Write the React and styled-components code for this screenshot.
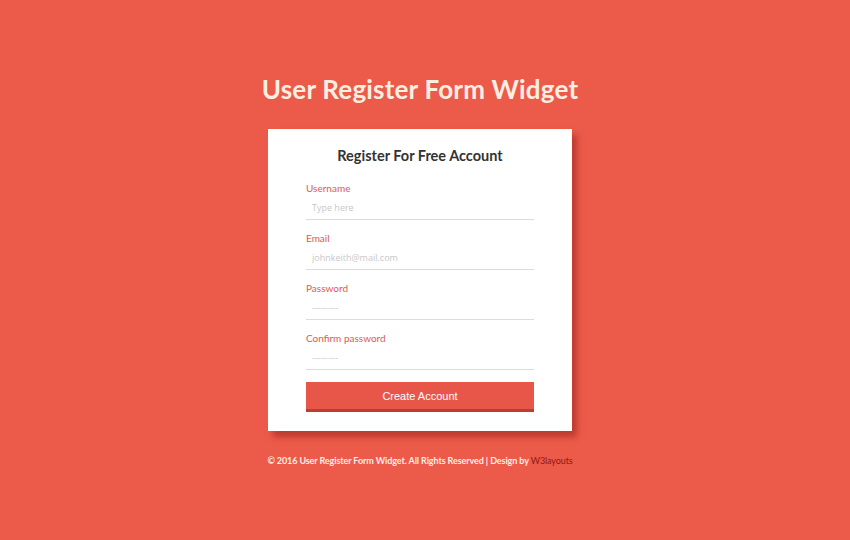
import React from 'react';
import styled, { createGlobalStyle } from 'styled-components';

const GlobalStyle = createGlobalStyle`
  html, body {
    margin: 0;
    padding: 0;
    background: #ec5a4a;
  }
  body {
    font-family: Lato, 'Open Sans', sans-serif;
  }
`;

const Page = styled.div`
  width: 850px;
  height: 540px;
  background: #ec5a4a;
  display: flex;
  flex-direction: column;
  align-items: center;
  padding: 72px 10px 0 0;
  box-sizing: border-box;
`;

const Title = styled.h1`
  margin: 0;
  font: bold 26px Lato, 'Open Sans', sans-serif;
  color: #fdeee2;
  letter-spacing: 0.2px;
  line-height: 34px;
`;

const Card = styled.div`
  margin-top: 23px;
  width: 304px;
  box-sizing: border-box;
  background: #fff;
  padding: 17px 38px 19px;
  box-shadow: 5px 6px 6px rgba(150, 35, 25, 0.55);
`;

const CardTitle = styled.h2`
  margin: 0 0 15px;
  text-align: center;
  font: bold 14.5px Lato, 'Open Sans', sans-serif;
  color: #333;
  line-height: 20px;
`;

const Field = styled.div`
  display: flex;
  flex-direction: column;
  margin-bottom: 11px;
`;

const Label = styled.label`
  font: 10px Lato, sans-serif;
  color: #e3594b;
  line-height: 14px;
`;

const Input = styled.input`
  border: none;
  border-bottom: 1px solid #dcdcdc;
  outline: none;
  padding: 6px 6px 5px;
  font: 9px 'Open Sans', sans-serif;
  color: #555;
  background: #fff;
  &::placeholder {
    color: #c8c8c8;
  }
`;

const Button = styled.button`
  display: block;
  width: 100%;
  height: 30px;
  margin-top: 12px;
  border: none;
  border-bottom: 3px solid #b9402f;
  background: #e8564a;
  color: #fff;
  font: 11px 'Liberation Sans', Arial, sans-serif;
  cursor: pointer;
`;

const Fields = styled.div`
  ${Field}:last-child {
    margin-bottom: 0;
  }
`;

const Footer = styled.p`
  margin: 24px 0 0;
  font: bold 9px Lato, sans-serif;
  letter-spacing: -0.1px;
  color: #fdeee6;
  a {
    color: #8e1b12;
    text-decoration: none;
    font-weight: normal;
  }
`;

const fields = [
  { label: 'Username', placeholder: 'Type here', type: 'text' },
  { label: 'Email', placeholder: 'johnkeith@mail.com', type: 'email' },
  { label: 'Password', placeholder: '---------', type: 'text' },
  { label: 'Confirm password', placeholder: '---------', type: 'text' },
];

export default function App() {
  return (
    <Page>
      <GlobalStyle />
      <Title>User Register Form Widget</Title>
      <Card>
        <CardTitle>Register For Free Account</CardTitle>
        <Fields>
          {fields.map(f => (
            <Field key={f.label}>
              <Label>{f.label}</Label>
              <Input type={f.type} placeholder={f.placeholder} />
            </Field>
          ))}
        </Fields>
        <Button>Create Account</Button>
      </Card>
      <Footer>
        © 2016 User Register Form Widget. All Rights Reserved | Design by <a href="#">W3layouts</a>
      </Footer>
    </Page>
  );
}
